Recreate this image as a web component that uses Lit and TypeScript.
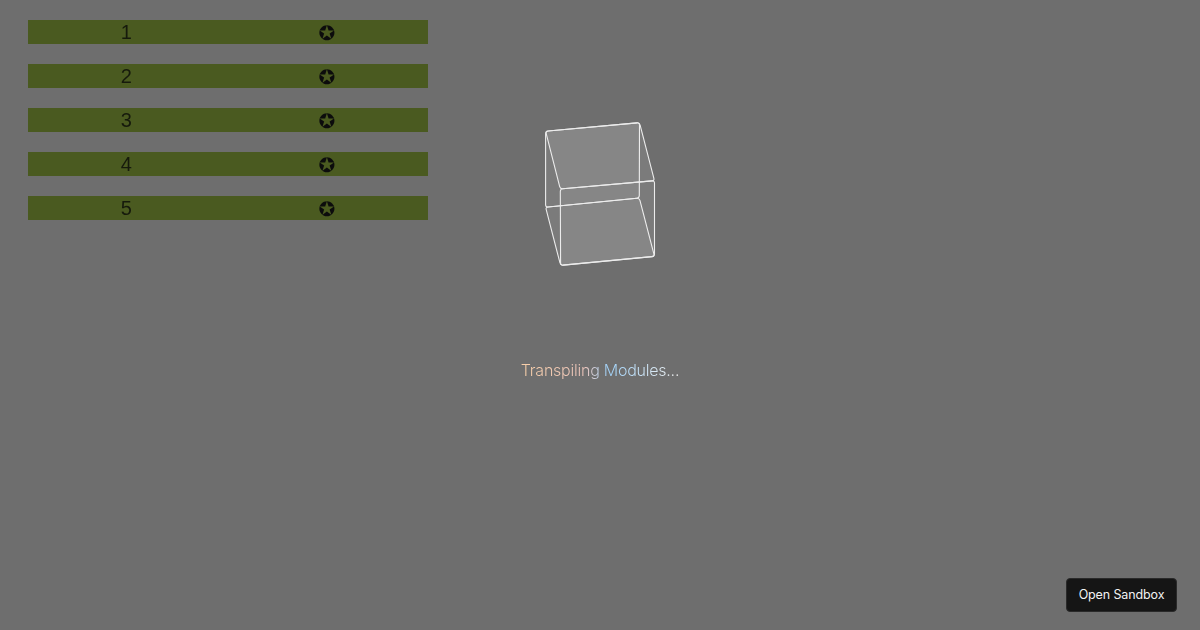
import { LitElement, html, css, svg } from "lit";
import { customElement } from "lit/decorators.js";

type P = [number, number];
const A: P = [545.6, 131.2], B: P = [639.5, 122.6], C: P = [654.5, 180.7], D: P = [560.3, 189];
const E: P = [545.6, 207.2], F: P = [639.3, 198], G: P = [654.5, 256.4], H: P = [560.6, 265.4];

function rounded(pts: P[], r = 2.5): string {
  const toward = (a: P, b: P): P => {
    const dx = b[0] - a[0], dy = b[1] - a[1], l = Math.hypot(dx, dy);
    return [a[0] + (dx / l) * r, a[1] + (dy / l) * r];
  };
  return pts
    .map((p, i) => {
      const prev = pts[(i + pts.length - 1) % pts.length];
      const next = pts[(i + 1) % pts.length];
      const s = toward(p, prev), e = toward(p, next);
      return `${i ? "L" : "M"}${s[0]} ${s[1]}Q${p[0]} ${p[1]} ${e[0]} ${e[1]}`;
    })
    .join("") + "Z";
}

const faces = [[A, B, F, E], [A, B, C, D], [E, F, G, H], [D, C, G, H]];

@customElement("app-root")
export class AppRoot extends LitElement {
  static styles = css`
    :host { display: block; width: 1200px; height: 630px; position: relative; overflow: hidden; background: #6e6e6e; font-family: "Liberation Sans", Arial, sans-serif; }
    .list { display: flex; flex-direction: column; gap: 20px; width: 400px; padding: 20px 0 0 28px; opacity: 0.999; }
    .row { display: flex; justify-content: space-around; align-items: center; height: 24px; background: #4a5a20; color: #161a0c; font-size: 20px; line-height: 24px; }
    .star { font-family: "DejaVu Sans", sans-serif; font-size: 20px; color: #0c0c0c; padding: 1px 0 0 1px; }
    .loader { position: absolute; inset: 0; }
    .cube { position: absolute; inset: 0; display: block; }
    .face { fill: rgba(255,255,255,0.09); stroke: #ececec; stroke-width: 1.1; }
    .msg { position: absolute; left: 0; right: 0; top: 360px; display: flex; justify-content: center; font: 300 16px/20px Inter, sans-serif; letter-spacing: -0.015em; }
    .msg span { background: linear-gradient(90deg, #f8cfa8 0%, #eec6bc 40%, #9fd2fa 55%, #d0e6f6 80%, #f0f0f0 100%); -webkit-background-clip: text; background-clip: text; color: transparent; }
    .open { position: absolute; right: 23px; bottom: 18px; width: 111px; height: 34px; box-sizing: border-box; padding-bottom: 1px; display: flex; align-items: center; justify-content: center; background: #151515; border: 1px solid #2a2a2a; border-radius: 4px; color: #f2f2f2; font: 400 12.5px Inter, sans-serif; letter-spacing: -0.01em; }
  `;

  render() {
    return html`
      <div class="list">
        ${[1, 2, 3, 4, 5].map((n) => html`<div class="row"><span>${n}</span><span class="star">✪</span></div>`)}
      </div>
      <div class="loader">
        <svg class="cube" viewBox="0 0 1200 630">
          ${faces.map((p) => svg`<path class="face" d=${rounded(p)}></path>`)}
        </svg>
        <div class="msg"><span>Transpiling Modules...</span></div>
      </div>
      <div class="open">Open Sandbox</div>
    `;
  }
}
